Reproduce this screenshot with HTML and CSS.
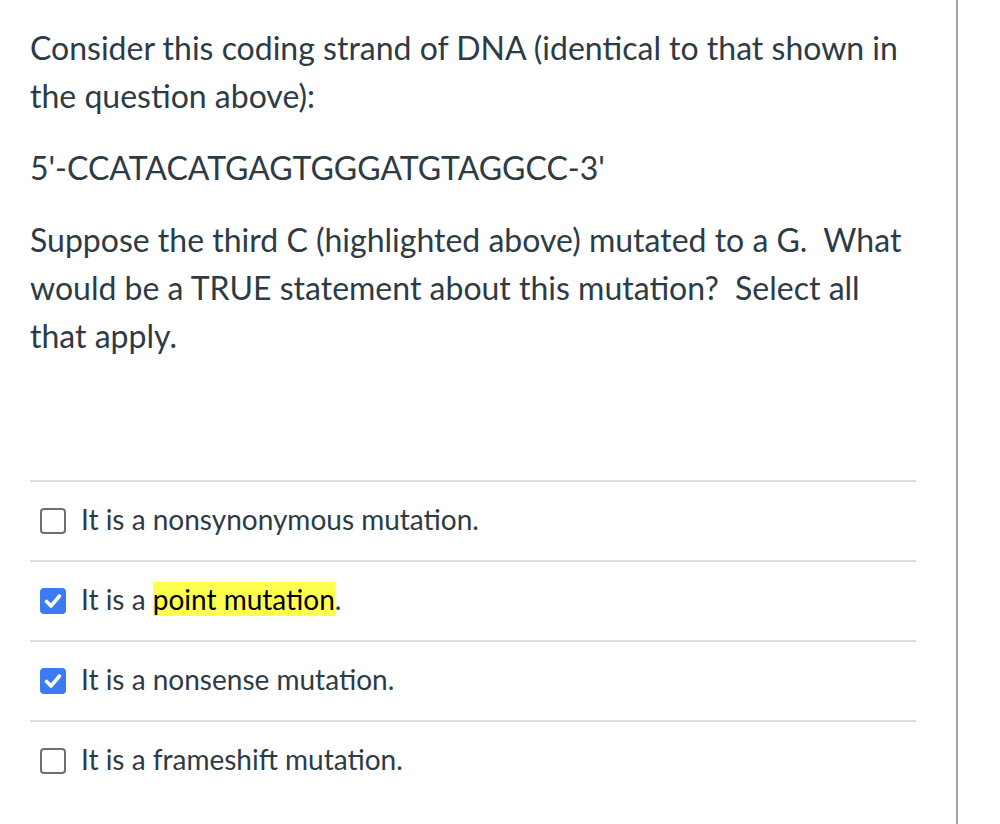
FILE: index.html
```html
<!DOCTYPE html>
<html>
<head>
<meta charset="utf-8">
<link rel="stylesheet" href="styles.css">
</head>
<body>
<div class="page">
  <div class="question">
    <p>Consider this coding strand of DNA (identical to that shown in the question above):</p>
    <p>5'-CCATACATGAGTGGGATGTAGGCC-3'</p>
    <p>Suppose the third C (highlighted above) mutated to a G.&nbsp; What would be a TRUE statement about this mutation?&nbsp; Select all that apply.</p>
  </div>
  <div class="answers">
    <label class="answer"><span class="box"></span><span class="text">It is a nonsynonymous mutation.</span></label>
    <label class="answer"><span class="box checked"><svg viewBox="0 0 26 26" width="26" height="26"><path d="M6.5 13.5 L11 18 L19.5 8" fill="none" stroke="#fff" stroke-width="3.6" stroke-linecap="round" stroke-linejoin="round"/></svg></span><span class="text">It is a <span class="hl">point mutation</span>.</span></label>
    <label class="answer"><span class="box checked"><svg viewBox="0 0 26 26" width="26" height="26"><path d="M6.5 13.5 L11 18 L19.5 8" fill="none" stroke="#fff" stroke-width="3.6" stroke-linecap="round" stroke-linejoin="round"/></svg></span><span class="text">It is a nonsense mutation.</span></label>
    <label class="answer"><span class="box"></span><span class="text">It is a frameshift mutation.</span></label>
  </div>
</div>
</body>
</html>
```
FILE: styles.css
```css
html, body {
  margin: 0;
  padding: 0;
  background: #fff;
}
.page {
  width: 956px;
  min-height: 824px;
  border-right: 2px solid #a6a6a6;
  box-sizing: content-box;
  font-family: Lato, "Liberation Sans", sans-serif;
  color: #2d3b45;
}
.question {
  padding: 24px 40px 0 30px;
}
.question p {
  margin: 0 0 24px 0;
  font-size: 32px;
  line-height: 48px;
}
.answers {
  margin: 120px 40px 0 30px;
  border-top: 2px solid #dcdcdc;
}
.answer {
  display: flex;
  align-items: center;
  gap: 15px;
  height: 78px;
  padding-left: 10px;
  border-bottom: 2px solid #dcdcdc;
  font-size: 28px;
}
.answer:last-child {
  border-bottom: none;
}
.text {
  padding-bottom: 4px;
}
.box {
  width: 26px;
  height: 26px;
  box-sizing: border-box;
  border: 2px solid #6f6f6f;
  border-radius: 4px;
  flex: none;
  display: flex;
  align-items: center;
  justify-content: center;
}
.box.checked {
  background: #3b7cf2;
  border: none;
}
.box svg {
  display: block;
}
.hl {
  background: #ffff4d;
  color: #000;
}
```
